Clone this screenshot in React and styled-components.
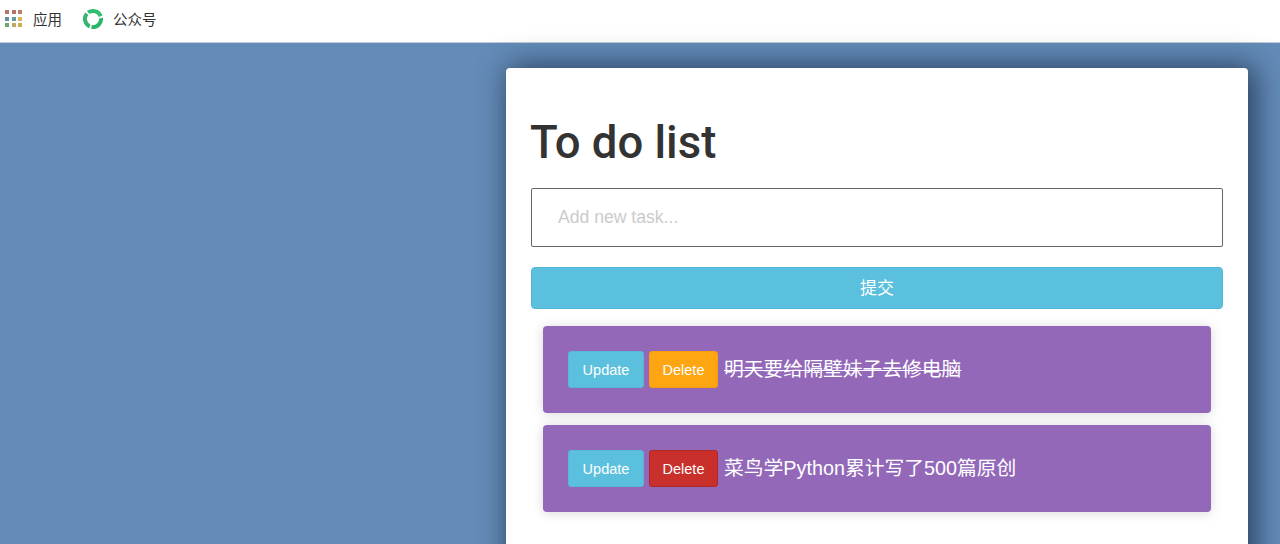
import React from "react";
import styled, { createGlobalStyle } from "styled-components";

const GlobalStyle = createGlobalStyle`
  html, body {
    margin: 0;
    padding: 0;
    height: 100%;
    overflow: hidden;
    background: #648cb8;
    font-family: "Liberation Sans", "Noto Sans CJK SC", sans-serif;
  }
  * { box-sizing: border-box; }
`;

const Page = styled.div`
  height: 544px;
  display: flex;
  flex-direction: column;
  overflow: hidden;
`;

const BookmarkBar = styled.div`
  height: 43px;
  flex: none;
  display: flex;
  align-items: center;
  padding: 0 0 5px 5px;
  background: #fff;
  border-bottom: 1px solid #c4ccd6;
`;

const Bookmark = styled.div`
  display: flex;
  align-items: center;
  gap: ${({ gap }) => gap}px;
  margin-right: 21px;
  font-size: 14.5px;
  color: #333;
`;

const AppsGrid = styled.div`
  display: grid;
  grid-template-columns: repeat(3, 4px);
  grid-auto-rows: 4px;
  gap: 2.5px;
`;

const Dot = styled.span`
  background: ${({ color }) => color};
  opacity: 0.85;
`;

const Main = styled.div`
  flex: 1;
  padding: 25px 32px 0 506px;
  display: flex;
  min-height: 0;
`;

const Card = styled.div`
  width: 742px;
  height: 520px;
  flex: none;
  padding: 0 25px;
  background: #fff;
  border-radius: 4px 4px 0 0;
  box-shadow: 5px 0 30px 2px rgba(15, 30, 55, 0.72);
`;

const Title = styled.h1`
  margin: 0 0 0 -1px;
  padding-top: 47px;
  height: 120px;
  font-family: Roboto, "Liberation Sans", sans-serif;
  font-size: 45.5px;
  line-height: 56px;
  font-weight: 500;
  color: #333;
`;

const TaskInput = styled.input`
  display: block;
  width: 692px;
  height: 59px;
  padding: 0 26px;
  border: 1px solid #666;
  border-radius: 2px;
  outline: none;
  font-family: inherit;
  font-size: 17.6px;
  color: #333;
  &::placeholder {
    color: #cbcbcb;
    opacity: 1;
  }
`;

const SubmitButton = styled.button`
  display: block;
  width: 692px;
  height: 42px;
  margin-top: 20px;
  padding: 0 0 3px;
  background: #5bc0de;
  border: 1px solid #53b6d4;
  border-radius: 4px;
  color: #fff;
  font-family: inherit;
  font-size: 17px;
`;

const TaskList = styled.div`
  display: flex;
  flex-direction: column;
  gap: 12px;
  margin-top: 17px;
  padding: 0 12px;
`;

const TaskRow = styled.div`
  height: 87px;
  display: flex;
  align-items: center;
  gap: 5px;
  padding: 0 25px;
  background: #9368b9;
  border-radius: 4px;
  box-shadow: 0 1px 12px rgba(60, 60, 60, 0.2);
`;

const ActionButton = styled.button`
  height: 37px;
  width: ${({ wide }) => (wide ? 76 : 69)}px;
  padding: 0;
  background: ${({ bg }) => bg};
  border: 1px solid ${({ edge }) => edge};
  border-radius: 3px;
  color: #fff;
  font-family: inherit;
  font-size: 14.5px;
`;

const TaskText = styled.span`
  position: relative;
  top: -2px;
  margin-left: 1px;
  color: #fff;
  font-size: 19.8px;
  white-space: nowrap;
  text-decoration: ${({ done }) => (done ? "line-through" : "none")};
  text-decoration-thickness: 1px;
`;

const dots = [
  "#a85a50", "#a85a50", "#b06a4a",
  "#3f7f98", "#4e8a8e", "#d8a63a",
  "#4c9a5c", "#b09a3c", "#c4a030",
];

const tasks = [
  { text: "明天要给隔壁妹子去修电脑", done: true, bg: "#fea611", edge: "#f59f10" },
  { text: "菜鸟学Python累计写了500篇原创", done: false, bg: "#c9302c", edge: "#ac2925" },
];

// one blade of the ring, repeated three times around the centre
const blade = "M10 0 C14.6 0 18.2 2.8 19.5 6.6 L15.8 8 C14.8 5.4 12.8 4 10 4 C8.6 4 7.4 4.4 6.4 5 L4 2 C5.6 0.7 7.7 0 10 0 Z";

const LeafLogo = () => (
  <svg width="20" height="20" viewBox="0 0 20 20">
    <path d={blade} fill="#2fbf6f" />
    <path d={blade} fill="#2ab56a" transform="rotate(120 10 10)" />
    <path d={blade} fill="#35b56e" transform="rotate(240 10 10)" />
  </svg>
);

export default function App() {
  return (
    <Page>
      <GlobalStyle />
      <BookmarkBar>
        <Bookmark gap={11}>
          <AppsGrid>
            {dots.map((color, i) => (
              <Dot key={i} color={color} />
            ))}
          </AppsGrid>
          应用
        </Bookmark>
        <Bookmark gap={10}>
          <LeafLogo />
          公众号
        </Bookmark>
      </BookmarkBar>
      <Main>
        <Card>
          <Title>To do list</Title>
          <TaskInput placeholder="Add new task..." />
          <SubmitButton>提交</SubmitButton>
          <TaskList>
            {tasks.map((task) => (
              <TaskRow key={task.text}>
                <ActionButton wide bg="#5bc0de" edge="#56b8d6">Update</ActionButton>
                <ActionButton bg={task.bg} edge={task.edge}>Delete</ActionButton>
                <TaskText done={task.done}>{task.text}</TaskText>
              </TaskRow>
            ))}
          </TaskList>
        </Card>
      </Main>
    </Page>
  );
}
